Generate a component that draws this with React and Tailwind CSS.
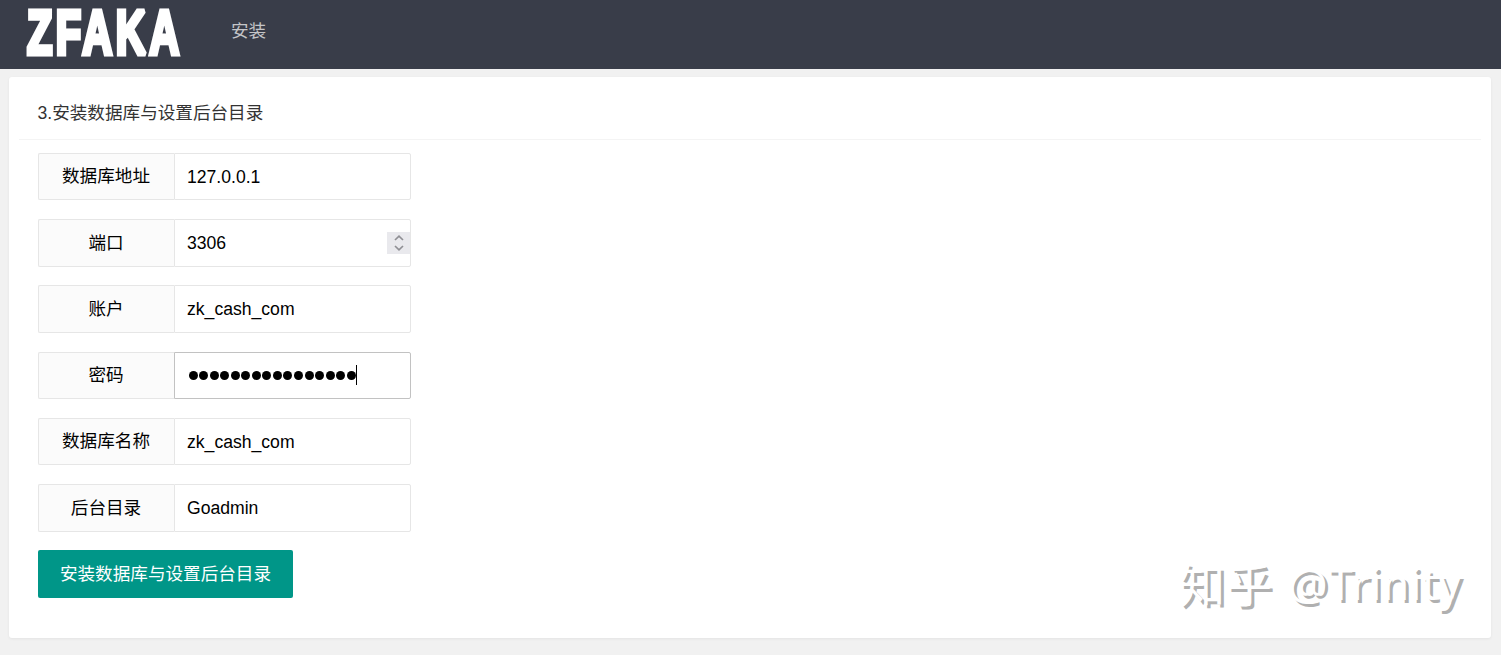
import React, { useState } from 'react';

const fields = [
  { name: 'host', label: '数据库地址', type: 'text' },
  { name: 'port', label: '端口', type: 'number' },
  { name: 'user', label: '账户', type: 'text' },
  { name: 'password', label: '密码', type: 'password' },
  { name: 'dbname', label: '数据库名称', type: 'text' },
  { name: 'directory', label: '后台目录', type: 'text' },
];

function Logo() {
  return (
    <svg width="190" height="69" viewBox="0 0 190 69" className="ml-[15px] overflow-visible">
      <text
        x="18"
        y="53.5"
        textLength="231"
        transform="scale(0.66 1)"
        fontSize="63"
        fontWeight="700"
        fill="white"
        stroke="white"
        strokeWidth="5"
        strokeMiterlimit="2"
        fontFamily="'Liberation Sans', sans-serif"
      >
        ZFAKA
      </text>
    </svg>
  );
}

function Header() {
  return (
    <header className="flex h-[69px] bg-[#393D49]">
      <div className="w-[231px]">
        <Logo />
      </div>
      <a href="#" className="mt-[18px] text-[17.6px] leading-[27px] text-[#c4c5c8]">安装</a>
    </header>
  );
}

function Spinner({ onStep }) {
  return (
    <div className="flex h-[22px] w-[23px] flex-col items-center justify-center gap-1 bg-[#e9e9ed]">
      <button type="button" onClick={() => onStep(1)}>
        <svg width="10" height="6" viewBox="0 0 10 6" fill="none" stroke="#8f8f94" strokeWidth="1.7">
          <path d="M1 5 5 1.2 9 5" />
        </svg>
      </button>
      <button type="button" onClick={() => onStep(-1)}>
        <svg width="10" height="6" viewBox="0 0 10 6" fill="none" stroke="#8f8f94" strokeWidth="1.7">
          <path d="M1 1 5 4.8 9 1" />
        </svg>
      </button>
    </div>
  );
}

function Field({ field, value, onChange }) {
  const isPassword = field.type === 'password';
  return (
    <div className="mb-[18.75px] flex h-[47.5px] w-[373px]">
      <label className="flex w-[136px] shrink-0 items-center justify-center rounded-l-[2px] border border-r-0 border-[#e6e6e6] bg-[#fbfbfb] pr-px text-[17.6px]">
        {field.label}
      </label>
      <div
        className={`flex min-w-0 flex-1 items-center rounded-r-[2px] border bg-white pl-3 ${isPassword ? 'border-[#c2c2c2]' : 'border-[#e6e6e6]'}`}
      >
        {isPassword ? (
          <>
            <div className="flex gap-[1.55px] pl-[1.5px]">
              {value.split('').map((_, index) => (
                <span key={index} className="h-[9px] w-[9px] rounded-full bg-black"></span>
              ))}
            </div>
            <span className="h-5 w-px bg-black"></span>
          </>
        ) : (
          <input
            type="text"
            value={value}
            onChange={event => onChange(event.target.value)}
            className="min-w-0 flex-1 bg-transparent pt-px text-[17.6px] outline-none"
          />
        )}
        {field.type === 'number' && <Spinner onStep={step => onChange(String(Number(value) + step))} />}
      </div>
    </div>
  );
}

function App() {
  const [values, setValues] = useState({
    host: '127.0.0.1',
    port: '3306',
    user: 'zk_cash_com',
    password: '****************',
    dbname: 'zk_cash_com',
    directory: 'Goadmin',
  });

  return (
    <div className="h-[655px] overflow-hidden bg-[#f1f1f1] font-['Liberation_Sans','Noto_Sans_CJK_SC',sans-serif] text-black">
      <Header />
      <main className="relative mt-2 mr-[10px] ml-[9px] h-[561px] rounded-[3px] bg-white px-[10px] shadow-[0_1px_3px_rgba(0,0,0,0.06)]">
        <h1 className="h-[63px] border-b border-[#f4f4f4] pt-[23px] pl-[18.5px] text-[17.6px] leading-[27px] text-[#333]">
          3.安装数据库与设置后台目录
        </h1>
        <form className="pt-[12.75px] pl-[19px]" onSubmit={event => event.preventDefault()}>
          {fields.map((field) => (
            <Field
              key={field.name}
              field={field}
              value={values[field.name]}
              onChange={value => setValues(prev => { return { ...prev, [field.name]: value } })}
            />
          ))}
          <button
            type="submit"
            className="flex h-[47.5px] w-[255px] items-center justify-center rounded-[2px] bg-[#009688] text-[17.6px] text-white"
          >
            安装数据库与设置后台目录
          </button>
        </form>
        <svg width="320" height="90" viewBox="0 0 320 90" className="absolute right-0 bottom-0">
          <g fontFamily="'Noto Sans', 'Noto Sans CJK SC', sans-serif" fontSize="44">
            <g fill="#b0b0b0">
              <text x="11" y="57" textLength="93" fontSize="46" fontFamily="'Noto Sans CJK SC', sans-serif">知乎</text>
              <text x="120" y="55" textLength="173">@Trinity</text>
            </g>
            <g fill="#fff">
              <text x="8" y="54" textLength="93" fontSize="46" fontFamily="'Noto Sans CJK SC', sans-serif">知乎</text>
              <text x="117" y="52" textLength="173">@Trinity</text>
            </g>
          </g>
        </svg>
      </main>
    </div>
  );
}

export default App;
